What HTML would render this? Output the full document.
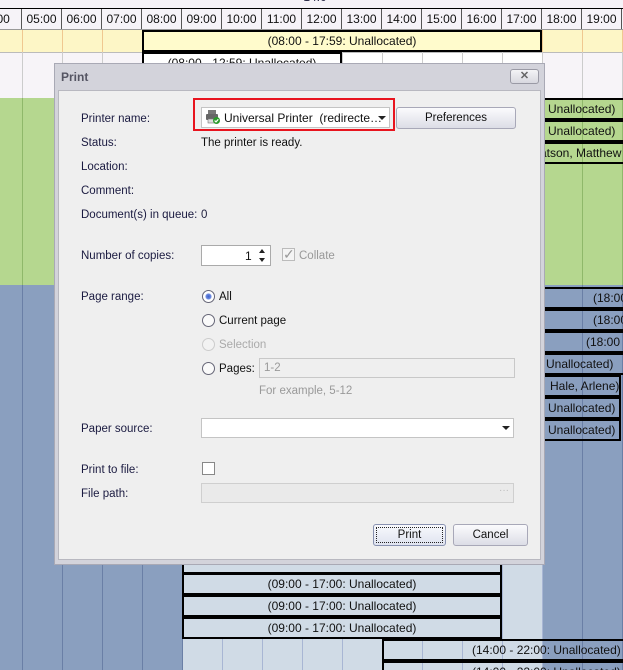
<!DOCTYPE html>
<html><head><meta charset="utf-8"><style>
*{margin:0;padding:0;box-sizing:border-box}
html,body{width:623px;height:670px;overflow:hidden}
body{position:relative;font-family:"Liberation Sans",Tahoma,sans-serif;font-size:12px;color:#1e1e3c;background:#8a9fbf}
.a{position:absolute}
.ev{position:absolute;border:2px solid #000;height:22px;line-height:19px;text-align:center;font-size:12px;color:#111;white-space:nowrap;overflow:hidden}
.vl{position:absolute;width:1px}
.lbl{position:absolute;left:81px;font-size:11.5px;color:#1a1a40}
#clip{position:absolute;left:0;top:0;width:623px;height:670px;overflow:hidden}
</style></head><body><div id="clip">
<div class="a" style="left:0;top:0;width:623px;height:30px;background:#f6f3f8"></div>
<div class="a" style="left:0;top:8px;width:623px;height:1px;background:#000"></div>
<div class="a" style="left:0;top:29px;width:623px;height:1px;background:#999"></div>
<div id="hdr"></div>
<div class="a" style="left:0;top:30px;width:623px;height:22px;background:#fdf6c6"></div>
<div class="a" style="left:0;top:52px;width:623px;height:46px;background:#f7f4f8;border-top:1px solid #bbb"></div>
<div class="a" style="left:343px;top:53px;width:200px;height:45px;background:#fff"></div>
<div class="a" style="left:0;top:98px;width:623px;height:187px;background:#b5d78f"></div>
<div class="a" style="left:0;top:285px;width:623px;height:385px;background:#8a9fbf"></div>
<div class="a" style="left:182px;top:560px;width:361px;height:110px;background:#d0dbe6"></div>
<div id="lines"></div>
<div class="ev" style="left:142px;top:30px;width:400px;background:#fffbcc">(08:00 - 17:59: Unallocated)</div>
<div class="ev" style="left:142px;top:52px;width:200px;background:#fff">(08:00 - 12:59: Unallocated)</div>
<div class="ev" style="left:540px;top:98px;width:100px;text-align:left;padding-left:6px;border-right:none">Unallocated)</div>
<div class="ev" style="left:540px;top:120px;width:100px;text-align:left;padding-left:6px;border-right:none">Unallocated)</div>
<div class="ev" style="left:540px;top:142px;width:100px;text-align:left;padding-left:0;border-right:none;border-left:none">atson, Matthew</div>
<div class="ev" style="left:540px;top:287px;width:100px;text-align:left;padding-left:53px;border-right:none;border-left:none">(18:00</div>
<div class="ev" style="left:540px;top:309px;width:100px;text-align:left;padding-left:53px;border-right:none;border-left:none">(18:00</div>
<div class="ev" style="left:540px;top:331px;width:100px;text-align:left;padding-left:46px;border-right:none;border-left:none">(18:00 -</div>
<div class="ev" style="left:540px;top:353px;width:100px;text-align:left;padding-left:6px;border-right:none;border-left:none">Unallocated)</div>
<div class="ev" style="left:540px;top:375px;width:81px;text-align:left;padding-left:8px">Hale, Arlene)</div>
<div class="ev" style="left:540px;top:397px;width:81px;text-align:left;padding-left:6px">Unallocated)</div>
<div class="ev" style="left:540px;top:419px;width:81px;text-align:left;padding-left:6px">Unallocated)</div>
<div class="ev" style="left:182px;top:552px;width:320px;background:#d0dbe6"></div>
<div class="ev" style="left:182px;top:573px;width:320px;background:#d0dbe6">(09:00 - 17:00: Unallocated)</div>
<div class="ev" style="left:182px;top:595px;width:320px;background:#d0dbe6">(09:00 - 17:00: Unallocated)</div>
<div class="ev" style="left:182px;top:617px;width:320px;background:#d0dbe6">(09:00 - 17:00: Unallocated)</div>
<div class="ev" style="left:382px;top:639px;width:260px;background:transparent;text-align:left;padding-left:88px;border-right:none">(14:00 - 22:00: Unallocated)</div>
<div class="ev" style="left:382px;top:661px;width:260px;background:transparent;text-align:left;padding-left:88px;border-right:none">(14:00 - 22:00: Unallocated)</div>

<div class="a" style="left:54px;top:63px;width:491px;height:502px;background:#d3d3db;border:1px solid #a9a9b5"></div>
<div class="a" style="left:61px;top:70px;font-weight:bold;font-size:12px;color:#555563">Print</div>
<div class="a" style="left:510px;top:69px;width:29px;height:15px;border:1px solid #9a9aa5;border-radius:3px;background:linear-gradient(#f4f4f6,#d8d8df);text-align:center;font-size:11px;line-height:12px;font-weight:bold;color:#666">✕</div>
<div class="a" style="left:58px;top:90px;width:483px;height:470px;background:#efefef;border:1px solid #b8b8c0"></div>

<div class="a" style="left:0;top:1px;width:623px;height:600px">
<div class="lbl" style="top:112px">Printer name:</div>
<div class="a" style="left:193px;top:97px;width:202px;height:33px;border:2px solid #e8141e"></div>
<div class="a" style="left:201px;top:106px;width:189px;height:21px;background:#fff;border:1px solid #c4c4c4"></div>
<svg class="a" style="left:205px;top:109px" width="16" height="15" viewBox="0 0 16 15"><rect x="3" y="0" width="8" height="4" fill="#777"/><rect x="1" y="4" width="12" height="6" rx="1" fill="#666"/><rect x="3" y="9" width="8" height="4" fill="#ddd" stroke="#777" stroke-width=".6"/><circle cx="11.5" cy="10.5" r="3.5" fill="#2a9a2a"/><path d="M9.6 10.6l1.4 1.3 2.3-2.6" stroke="#fff" stroke-width="1.2" fill="none"/></svg>
<div class="a" style="left:224px;top:110px;font-size:12px;color:#111">Universal Printer&nbsp; (redirecte…</div>
<div class="a" style="left:378px;top:115px;border-left:4px solid transparent;border-right:4px solid transparent;border-top:4px solid #222"></div>
<div class="a" style="left:396px;top:106px;width:120px;height:22px;border:1px solid #a8a8b8;border-radius:3px;background:linear-gradient(#fbfbfd,#dcdde6);text-align:center;line-height:20px;font-size:11.5px;color:#111">Preferences</div>

<div class="lbl" style="top:136px">Status:</div>
<div class="a" style="left:201px;top:136px;font-size:11.5px;color:#111">The printer is ready.</div>
<div class="lbl" style="top:160px">Location:</div>
<div class="lbl" style="top:184px">Comment:</div>
<div class="lbl" style="top:208px">Document(s) in queue:</div>
<div class="a" style="left:201px;top:208px;font-size:11.5px">0</div>

<div class="lbl" style="top:249px">Number of copies:</div>
<div class="a" style="left:201px;top:244px;width:70px;height:21px;background:#fff;border:1px solid #aaa"></div>
<div class="a" style="left:245px;top:248px;font-size:12px;color:#111">1</div>
<div class="a" style="left:259px;top:248px;border-left:3px solid transparent;border-right:3px solid transparent;border-bottom:4px solid #222"></div>
<div class="a" style="left:259px;top:257px;border-left:3px solid transparent;border-right:3px solid transparent;border-top:4px solid #222"></div>
<div class="a" style="left:282px;top:247px;width:13px;height:13px;border:1px solid #bbb;background:#f4f4f4;color:#999;font-size:14px;line-height:10px">✓</div>
<div class="a" style="left:299px;top:249px;font-size:11.5px;color:#999">Collate</div>

<div class="lbl" style="top:290px">Page range:</div>
<div class="a" style="left:202px;top:289px;width:13px;height:13px;border-radius:50%;border:1px solid #667;background:radial-gradient(circle,#3b5fc8 0,#6d8be0 2.5px,#fff 3.5px)"></div>
<div class="a" style="left:219px;top:290px;font-size:11.5px;color:#111">All</div>
<div class="a" style="left:202px;top:313px;width:13px;height:13px;border-radius:50%;border:1px solid #667;background:#fafafa"></div>
<div class="a" style="left:219px;top:314px;font-size:11.5px;color:#111">Current page</div>
<div class="a" style="left:202px;top:337px;width:13px;height:13px;border-radius:50%;border:1px solid #ccc;background:#f2f2f2"></div>
<div class="a" style="left:219px;top:338px;font-size:11.5px;color:#aaa">Selection</div>
<div class="a" style="left:202px;top:361px;width:13px;height:13px;border-radius:50%;border:1px solid #667;background:#fafafa"></div>
<div class="a" style="left:219px;top:362px;font-size:11.5px;color:#111">Pages:</div>
<div class="a" style="left:259px;top:357px;width:256px;height:20px;border:1px solid #c8c8c8;background:#efefef"></div>
<div class="a" style="left:264px;top:361px;font-size:11.5px;color:#999">1-2</div>
<div class="a" style="left:259px;top:384px;font-size:11.5px;color:#999">For example, 5-12</div>

<div class="lbl" style="top:422px">Paper source:</div>
<div class="a" style="left:201px;top:417px;width:313px;height:20px;background:#fff;border:1px solid #c4c4c4"></div>
<div class="a" style="left:502px;top:425px;border-left:4px solid transparent;border-right:4px solid transparent;border-top:4px solid #222"></div>

<div class="lbl" style="top:463px">Print to file:</div>
<div class="a" style="left:202px;top:461px;width:13px;height:13px;border:1px solid #888;background:#fff"></div>
<div class="lbl" style="top:487px">File path:</div>
<div class="a" style="left:201px;top:482px;width:313px;height:20px;background:#eaeaea;border:1px solid #cfcfcf"></div>
<div class="a" style="left:499px;top:484px;font-size:10px;color:#bbb">···</div>

<div class="a" style="left:373px;top:523px;width:73px;height:22px;border:1px solid #8891b0;border-radius:3px;background:linear-gradient(#f8f9fd,#dfe3ef)"></div>
<div class="a" style="left:376px;top:526px;width:67px;height:16px;border:1px dotted #222;text-align:center;line-height:14px;font-size:11.5px;color:#111">Print</div>
<div class="a" style="left:453px;top:523px;width:75px;height:22px;border:1px solid #a8a8b8;border-radius:3px;background:linear-gradient(#fbfbfd,#dcdde6);text-align:center;line-height:20px;font-size:11.5px;color:#111">Cancel</div>
</div>
</div>
<script>
var h='',l='';
var labels=[':00','05:00','06:00','07:00','08:00','09:00','10:00','11:00','12:00','13:00','14:00','15:00','16:00','17:00','18:00','19:00'];
for(var i=0;i<16;i++){var x=i==0?-18:22+40*(i-1);
h+='<div class="a" style="left:'+x+'px;top:9px;width:40px;height:20px;text-align:center;line-height:20px;font-size:12px;color:#111;border-right:1px solid #555">'+labels[i]+'</div>';
var lx=x+40;
l+='<div class="vl" style="left:'+lx+'px;top:30px;height:22px;background:#f0c890"></div>';
l+='<div class="vl" style="left:'+lx+'px;top:52px;height:46px;background:#ccc"></div>';
l+='<div class="vl" style="left:'+lx+'px;top:98px;height:187px;background:#8fb86a"></div>';
l+='<div class="vl" style="left:'+lx+'px;top:285px;height:385px;background:'+(lx>182&&lx<543?'#a8b6d4':'#6a7fa6')+'"></div>';}
h+='<div class="a" style="left:300px;top:-10px;width:30px;text-align:center;font-size:12px">14:0</div>';
document.getElementById('hdr').innerHTML=h;document.getElementById('lines').innerHTML=l;
</script>
</body></html>
